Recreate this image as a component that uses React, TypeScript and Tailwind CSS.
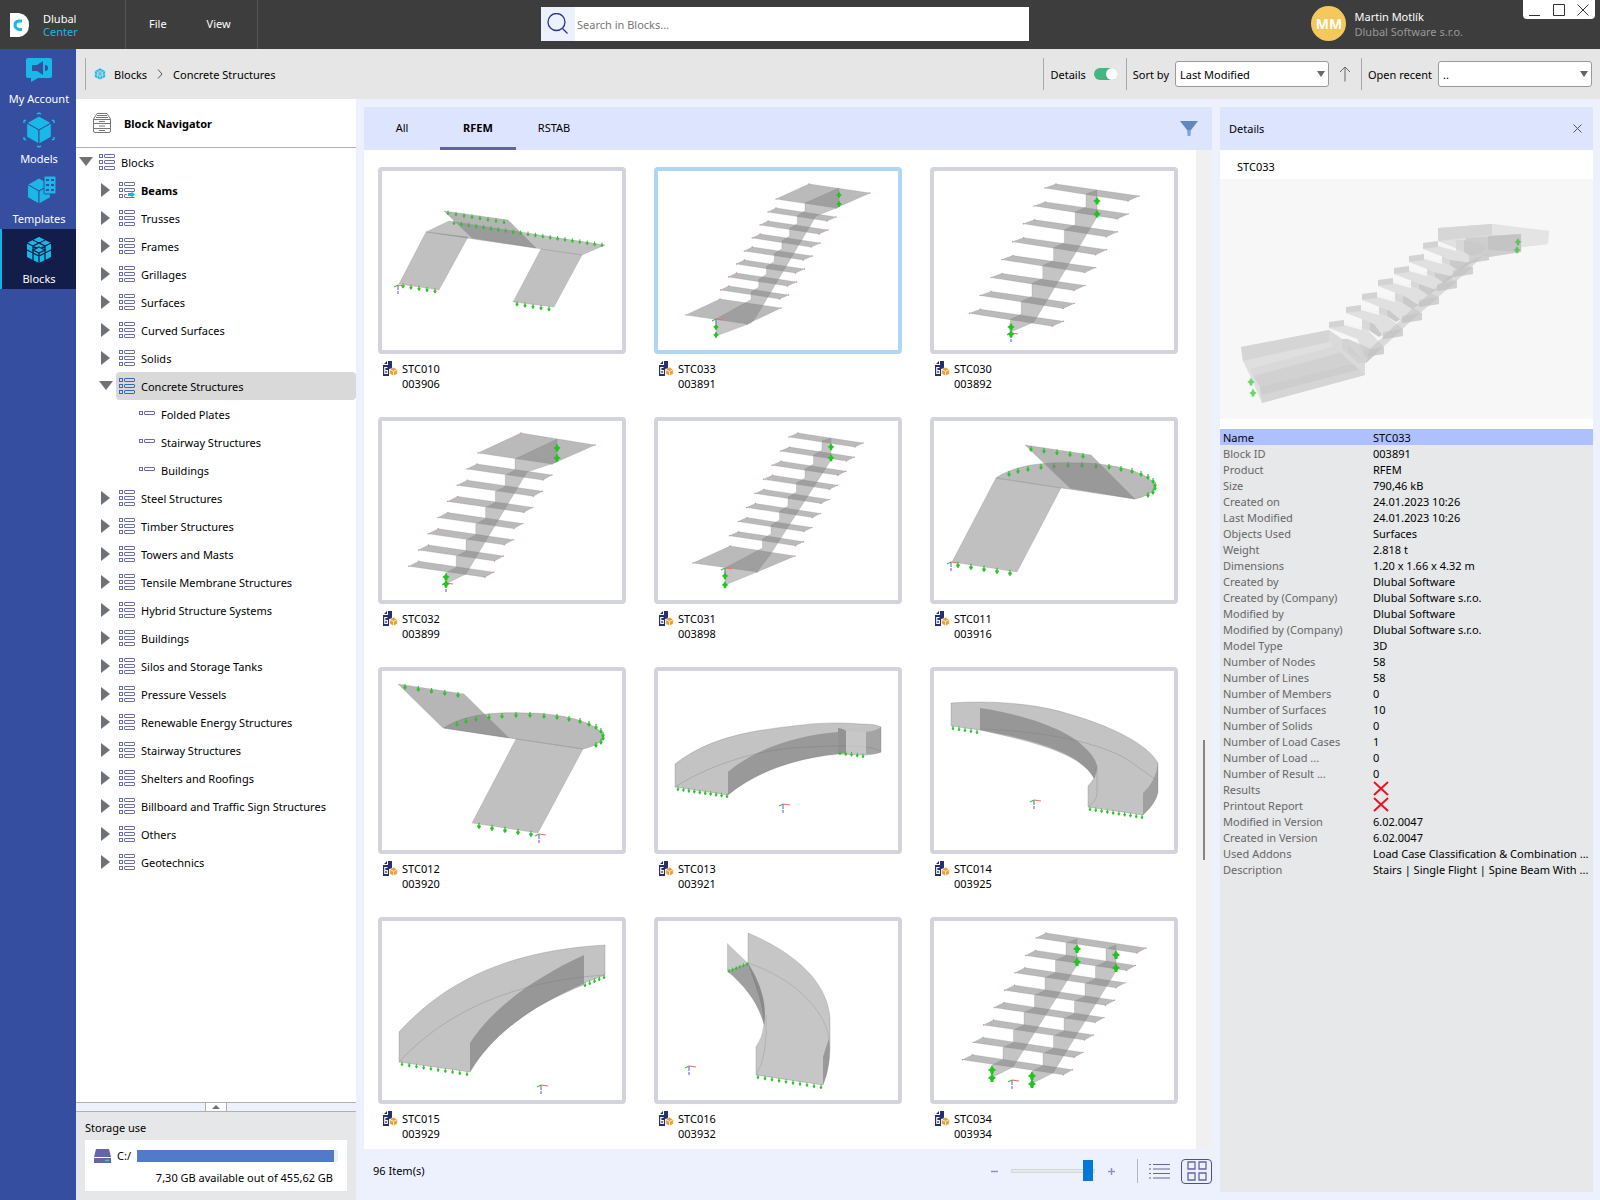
import React, { useState } from "react";

type Pt = [number, number];
const pts = (p: Pt[]) => p.map((q) => q.join(",")).join(" ");

/* ---------- 3D drawing primitives ---------- */

function Face({ p, o = 0.5 }: { p: Pt[]; o?: number }) {
  return <polygon points={pts(p)} fill="#828282" fillOpacity={o} stroke="#777" strokeOpacity={0.2} strokeWidth={1} />;
}

function Support({ x, y, s = 1 }: { x: number; y: number; s?: number }) {
  return (
    <path
      transform={`translate(${x} ${y}) scale(${s})`}
      d="M0 -5L1.700 -1.800L4.200 0L1.900 1.300L1.300 4H-1.300L-1.900 1.300L-4.200 0L-1.700 -1.800Z"
      fill="#1fc41f"
    />
  );
}

function Pin({ x, y, s = 1 }: { x: number; y: number; s?: number }) {
  return <path transform={`translate(${x} ${y}) scale(${s})`} d="M-0.600 -3H0.600V-1L1.900 0L0.600 2.600H-0.600L-1.900 0L-0.600 -1Z" fill="#2fc22f" />;
}

function Pins({ a, b, n, s = 1 }: { a: Pt; b: Pt; n: number; s?: number }) {
  return (
    <>
      {Array.from({ length: n }, (_, i) => (
        <Pin key={i} x={a[0] + ((b[0] - a[0]) * i) / (n - 1)} y={a[1] + ((b[1] - a[1]) * i) / (n - 1)} s={s} />
      ))}
    </>
  );
}

function Axis({ x, y }: { x: number; y: number }) {
  return (
    <g fill="none" strokeWidth={1.2}>
      <path d={`M${x} ${y}v9`} stroke="#7272e8" strokeDasharray="5 1" />
      <path d={`M${x} ${y}l7 1`} stroke="#ee6d6d" />
      <path d={`M${x} ${y}l-4 2`} stroke="#36c436" />
    </g>
  );
}

function Treads({ first, step, n }: { first: Pt[]; step: Pt; n: number }) {
  return (
    <>
      {Array.from({ length: n }, (_, k) => {
        const p = first.map(([x, y]): Pt => [x + step[0] * k, y + step[1] * k]);
        return (
          <g key={k}>
            <Face p={p} o={0.55} />
            {p.map(([x, y], i) => (
              <circle key={i} cx={x} cy={y} r={0.7} fill="#d98b8b" />
            ))}
          </g>
        );
      })}
    </>
  );
}

function Spine({ back, start, step, n, tail }: { back: Pt; start: Pt; step: Pt; n: number; tail: Pt[] }) {
  const p: Pt[] = [back];
  for (let k = 0; k < n; k++) {
    p.push([start[0] + step[0] * k, start[1] + step[1] * k]);
    p.push([start[0] + step[0] * k, start[1] + step[1] * (k + 1) - 5]);
  }
  return <Face p={[...p, ...tail]} o={0.47} />;
}

const arcPins: Pt[] = [
  [75, 53], [84, 50], [94, 48], [107, 46], [120, 45], [134, 44], [148, 44], [162, 45], [175, 46],
  [187, 48], [198, 50], [207, 53], [214, 56], [219, 60], [221, 64], [221, 67], [219, 71], [214, 74],
];

function RoundLanding() {
  return (
    <g>
      <path
        d="M62 57C84 42 118 41 142 42C178 42 208 50 218 60C225 67 220 73 201 78Z"
        fill="#828282"
        fillOpacity={0.55}
        stroke="#777"
        strokeOpacity={0.3}
      />
      {arcPins.map(([x, y]) => (
        <Pin key={`${x}-${y}`} x={x} y={y} />
      ))}
    </g>
  );
}

/* ---------- Thumbnails, each on a 240 x 179 canvas ---------- */

const drawings: Record<string, React.ReactNode> = {
  STC010: (
    <>
      <Face p={[[44, 61], [86, 66], [57, 119], [17, 113]]} />
      <Face p={[[159, 78], [200, 84], [172, 136], [131, 131]]} />
      <Face p={[[67, 50], [223, 74], [200, 84], [44, 61]]} />
      <Face p={[[62, 40], [126, 49], [154, 77], [90, 67]]} o={0.6} />
      <Pins a={[66, 42]} b={[122, 51]} n={8} s={0.8} />
      <Pins a={[72, 52]} b={[220, 74]} n={21} s={0.8} />
      <Pins a={[21, 115]} b={[53, 120]} n={5} s={0.9} />
      <Pins a={[135, 133]} b={[167, 138]} n={5} s={0.9} />
      <Axis x={16} y={114} />
    </>
  ),
  STC033: (
    <>
      <Treads first={[[151, 13], [212, 22], [178, 37], [118, 28]]} step={[0, 0]} n={1} />
      <Treads first={[[118, 37], [178, 46], [169, 50], [110, 41]]} step={[-7.9, 13]} n={7} />
      <Treads first={[[62, 128], [123, 137], [89, 153], [28, 144]]} step={[0, 0]} n={1} />
      <Spine back={[181, 17]} start={[147, 32]} step={[-7.7, 12.7]} n={8} tail={[[58, 148], [58, 165], [93, 152], [98, 146], [158, 45], [181, 36]]} />
      <Support x={181} y={24} s={0.7} />
      <Support x={181} y={33} s={0.7} />
      <Axis x={58} y={148} />
      <Support x={58} y={156} s={0.7} />
      <Support x={58} y={164} s={0.7} />
    </>
  ),
  STC030: (
    <>
      <Treads first={[[122, 13], [205, 25], [194, 30], [111, 17]]} step={[-10.8, 17.9]} n={8} />
      <Spine back={[163, 19]} start={[152, 23]} step={[-10.8, 17.9]} n={8} tail={[[100, 151], [163, 46]]} />
      <Support x={163} y={30} s={0.9} />
      <Support x={163} y={43} s={0.9} />
      <Axis x={77} y={162} />
      <Support x={77} y={156} s={0.9} />
      <Support x={77} y={163} s={0.9} />
    </>
  ),
  STC032: (
    <>
      <Treads first={[[139, 12], [213, 24], [170, 43], [96, 32]]} step={[0, 0]} n={1} />
      <Treads first={[[95, 43], [170, 54], [161, 59], [85, 48]]} step={[-9.7, 16.2]} n={7} />
      <Spine back={[175, 18]} start={[133, 38]} step={[-9.8, 16.2]} n={8} tail={[[84, 153], [145, 51], [175, 41]]} />
      <Support x={175} y={27} s={0.9} />
      <Support x={175} y={37} s={0.9} />
      <Axis x={64} y={162} />
      <Support x={64} y={156} s={0.9} />
      <Support x={64} y={163} s={0.9} />
    </>
  ),
  STC031: (
    <>
      <Treads first={[[140, 12], [205, 22], [197, 26], [131, 16]]} step={[-8.5, 14.1]} n={8} />
      <Treads first={[[72, 125], [137, 135], [99, 151], [35, 142]]} step={[0, 0]} n={1} />
      <Spine back={[173, 17]} start={[164, 20]} step={[-8.5, 14]} n={8} tail={[[67, 147], [67, 164], [99, 151], [112, 134], [173, 39]]} />
      <Support x={173} y={26} s={0.8} />
      <Support x={173} y={37} s={0.8} />
      <Axis x={67} y={147} />
      <Support x={67} y={155} s={0.8} />
      <Support x={67} y={164} s={0.8} />
    </>
  ),
  STC011: (
    <>
      <Face p={[[62, 57], [127, 67], [83, 151], [18, 141]]} />
      <RoundLanding />
      <Face p={[[91, 24], [157, 34], [201, 78], [136, 67]]} o={0.58} />
      <Pins a={[97, 28]} b={[149, 35]} n={5} />
      <Pins a={[24, 144]} b={[76, 152]} n={5} s={1.1} />
      <Axis x={17} y={141} />
    </>
  ),
  STC012: (
    <>
      <Face p={[[16, 13], [82, 23], [127, 67], [61, 57]]} o={0.58} />
      <RoundLanding />
      <Face p={[[134, 68], [201, 78], [156, 162], [90, 152]]} />
      <Pins a={[23, 16]} b={[76, 24]} n={5} />
      <Pins a={[97, 155]} b={[149, 163]} n={5} s={1.1} />
      <Axis x={157} y={163} />
    </>
  ),
  STC013: (
    <>
      <path
        d="M17 93C52 66 92 60 135 55Q169 50 203 53Q218 53 223 56V81Q219 83 208 84L180 83C148 86 104 96 70 124L17 116Z"
        fill="#828282"
        fillOpacity={0.48}
        stroke="#777"
        strokeOpacity={0.3}
      />
      <path d="M17 116C55 92 105 77 151 76Q185 74 207 76Q218 77 223 81" fill="none" stroke="#777" strokeOpacity={0.3} />
      <path d="M70 101C96 78 140 64 180 61V83C140 87 100 99 70 124Z" fill="#6b6b6b" fillOpacity={0.48} />
      <path d="M180 57Q186 58 188 60V82L180 83Z" fill="#6b6b6b" fillOpacity={0.55} />
      <path d="M188 60L208 61V83L188 82Z" fill="#c9c9c9" fillOpacity={0.7} />
      <path d="M208 61Q218 60 223 56V81Q219 83 208 83Z" fill="#6b6b6b" fillOpacity={0.35} />
      <Pins a={[20, 118]} b={[69, 125]} n={10} s={0.8} />
      <Pins a={[182, 82]} b={[205, 85]} n={5} s={0.8} />
      <Axis x={125} y={133} />
    </>
  ),
  STC014: (
    <>
      <path
        d="M17 32C58 29 104 33 135 43C180 56 214 74 224 92V121Q222 132 209 144L154 136V115Q163 106 162 98L160 107C148 86 116 74 46 59L17 55Z"
        fill="#828282"
        fillOpacity={0.48}
        stroke="#777"
        strokeOpacity={0.3}
      />
      <path d="M46 37C94 44 134 60 148 74Q164 88 163 98Q162 103 160 107C146 84 112 71 46 59Z" fill="#6b6b6b" fillOpacity={0.5} />
      <path d="M46 58C110 60 170 72 197 91Q218 106 222 109M163 94V124Q162 130 154 136" fill="none" stroke="#777" strokeOpacity={0.3} />
      <path d="M224 92V121Q222 132 209 144V122Q222 110 224 92Z" fill="#6b6b6b" fillOpacity={0.4} />
      <Pins a={[19, 57]} b={[43, 61]} n={5} s={0.8} />
      <Pins a={[156, 138]} b={[208, 146]} n={10} s={0.8} />
      <Axis x={100} y={129} />
    </>
  ),
  STC015: (
    <>
      <path
        d="M17 111C60 64 120 30 223 24V54L202 62C156 82 112 110 88 151L17 141Z"
        fill="#828282"
        fillOpacity={0.48}
        stroke="#777"
        strokeOpacity={0.3}
      />
      <path d="M17 141C62 92 130 60 223 54" fill="none" stroke="#777" strokeOpacity={0.3} />
      <path d="M88 122C110 88 150 58 202 34V64C156 82 112 110 88 151Z" fill="#6b6b6b" fillOpacity={0.5} />
      <Pins a={[20, 143]} b={[85, 153]} n={10} s={0.8} />
      <Pins a={[203, 64]} b={[222, 56]} n={5} s={0.8} />
      <Axis x={159} y={164} />
    </>
  ),
  STC016: (
    <>
      <path
        d="M90 12C142 34 170 64 172 98V126Q172 146 165 164L98 154V126Q105 116 106 104C106 84 98 66 90 42Z"
        fill="#828282"
        fillOpacity={0.46}
        stroke="#777"
        strokeOpacity={0.3}
      />
      <path d="M69 22L90 42L69 50Z" fill="#828282" fillOpacity={0.45} />
      <path d="M69 50L90 42C100 58 110 80 106 104C100 82 88 66 69 50Z" fill="#6b6b6b" fillOpacity={0.65} />
      <path d="M90 42C132 56 166 86 171 117M108 94Q110 136 98 154" fill="none" stroke="#777" strokeOpacity={0.25} />
      <path d="M171 117Q174 142 165 164V136Z" fill="#6b6b6b" fillOpacity={0.5} />
      <Pins a={[71, 50]} b={[89, 43]} n={6} s={0.7} />
      <Pins a={[100, 156]} b={[163, 166]} n={10} s={0.8} />
      <Axis x={31} y={145} />
    </>
  ),
  STC034: (
    <>
      <Treads first={[[112, 12], [212, 27], [203, 32], [102, 17]]} step={[-10.5, 17.4]} n={8} />
      <Spine back={[143, 18]} start={[132, 22]} step={[-10.5, 17.4]} n={8} tail={[[79, 146], [143, 44]]} />
      <Spine back={[182, 24]} start={[172, 28]} step={[-10.5, 17.4]} n={8} tail={[[119, 152], [182, 50]]} />
      <Support x={143} y={28} />
      <Support x={143} y={41} />
      <Support x={182} y={34} />
      <Support x={182} y={47} />
      <Axis x={78} y={159} />
      <Support x={58} y={149} />
      <Support x={58} y={157} />
      <Support x={98} y={155} />
      <Support x={98} y={163} />
    </>
  ),
};

function PreviewDrawing() {
  const steps: { l: Pt; r: Pt }[] = [
    { l: [109, 143], r: [164, 168] },
    { l: [126, 128], r: [183, 150] },
    { l: [142, 115], r: [202, 134] },
    { l: [158, 101], r: [219, 118] },
    { l: [174, 89], r: [237, 102] },
    { l: [189, 77], r: [253, 88] },
    { l: [203, 64], r: [269, 74] },
  ];
  return (
    <svg viewBox="0 0 373 240" className="block w-full bg-[#f7f7f7]" role="img" aria-label="STC033 preview">
      <polygon points="21,168 109,151 145,184 145,196 42,224 32,201 23,182" fill="#dfdfdf" />
      <polygon points="21,168 109,151 109,163 23,182" fill="#d5d5d5" />
      <polygon points="30,190 119,166 126,172 33,197" fill="#d9d9d9" />
      <polygon points="33,197 126,172 145,184 40,208" fill="#d1d1d1" />
      <polygon points="40,208 145,185 145,196 42,224" fill="#d5d5d5" />
      <polygon points="40,208 138,184 145,189 41,216" fill="#c9c9c9" fillOpacity={0.7} />
      <polygon points="218,49 272,45 329,52 328,65 302,68 301,73 269,78 240,71 218,62" fill="#e1e1e1" />
      <polygon points="218,49 272,45 272,56 218,62" fill="#d6d6d6" />
      <polygon points="272,45 329,52 328,65 302,68 302,56 272,56" fill="#e4e4e4" />
      <polygon points="109,151 122,160 145,184 145,196 109,163" fill="#dadada" />
      {steps.map(({ l: [x, y], r }) => (
        <g key={x}>
          <polygon
            points={pts([[x, y + 6], [x + 15, y + 3], [x + 36, y + 5], r, [r[0], r[1] + 7], [r[0] - 18, r[1] + 10], [x + 28, y + 17]])}
            fill="#e0e0e0"
          />
          <polygon points={pts([[x + 41, y - 3], [x + 60, y + 1], [x + 64, y + 6], [x + 50, y + 15], [x + 41, y + 9]])} fill="#cacaca" />
          <polygon points={pts([[x + 33, y - 3], [x + 41, y - 3], [x + 41, y + 9], [x + 33, y + 6]])} fill="#d8d8d8" />
          <polygon points={pts([[x, y], [x + 15, y - 2], [x + 15, y + 4], [x, y + 6]])} fill="#d3d3d3" />
          <polygon points={pts([[x + 15, y], [x + 33, y + 5], [x + 33, y + 8], [x + 15, y + 3]])} fill="#f5f5f5" />
          <polygon points={pts([[r[0] - 20, r[1] + 3], r, [r[0], r[1] + 7], [r[0] - 20, r[1] + 10]])} fill="#d0d0d0" />
        </g>
      ))}
      <polygon points="246,59 272,57 301,55 301,73 269,78 246,72" fill="#c9c9c9" fillOpacity={0.8} />
      <polygon points="268,57 301,55 301,73 268,71" fill="#c1c1c1" fillOpacity={0.7} />
      <polygon points="122,160 128,160 128,172 146,184 138,184 122,170" fill="#d3d3d3" />
      <polygon points="128,160 158,173 146,184 128,172" fill="#cacaca" fillOpacity={0.8} />
      <polygon points="262,77 246,84 220,105 190,132 150,170 146,184 190,143 223,114 250,90" fill="#bebebe" fillOpacity={0.5} />
      <g opacity={0.65}>
        <Support x={298} y={63} s={0.8} />
        <Support x={297} y={71} s={0.8} />
        <Support x={31} y={203} s={0.9} />
        <Support x={33} y={214} s={0.9} />
      </g>
    </svg>
  );
}

/* ---------- Icons ---------- */

function Cube({ x, y, r, fill = "#19b8e6", line }: { x: number; y: number; r: number; fill?: string; line: string }) {
  const w = r * 0.88;
  const h = r / 2;
  return (
    <g transform={`translate(${x} ${y})`} fill={fill} stroke={line} strokeWidth={r > 6 ? 1 : 0.6} strokeLinejoin="round">
      <path d={`M0 ${-r}L${w} ${-h}L0 0L${-w} ${-h}Z`} />
      <path d={`M${-w} ${-h}L0 0V${r}L${-w} ${h}Z`} />
      <path d={`M${w} ${-h}L0 0V${r}L${w} ${h}Z`} />
    </g>
  );
}

function AccountIcon() {
  return (
    <svg width="36" height="36" viewBox="0 0 36 36">
      <path d="M7 6h22a2 2 0 0 1 2 2v16a2 2 0 0 1-2 2H17l-7 4v-4H7a2 2 0 0 1-2-2V8a2 2 0 0 1 2-2Z" fill="#19b8e6" />
      <path d="M11 13h5l6-4v14l-6-4h-5ZM24 13q3 0 3 3t-3 3Z" fill="#354e9f" />
    </svg>
  );
}

function ModelsIcon() {
  return (
    <svg width="36" height="36" viewBox="0 0 36 36">
      <Cube x={18} y={18} r={14} line="#354e9f" />
      <g fill="none" stroke="#19b8e6" strokeWidth="1.5">
        <path d="M16 2l2-1 2 1M16 34l2 1 2-1M3 11V9l2-1M33 11V9l-2-1M3 25v2l2 1M33 25v2l-2 1" />
      </g>
    </svg>
  );
}

function TemplatesIcon() {
  return (
    <svg width="36" height="36" viewBox="0 0 36 36">
      <Cube x={18} y={19} r={13} line="#354e9f" />
      <rect x="23" y="4" width="12" height="18" rx="1" fill="#19b8e6" stroke="#354e9f" />
      <path d="M25 8h3M30 8h3M25 13h3M30 13h3M25 18h3M30 18h3" stroke="#354e9f" strokeWidth="2" />
    </svg>
  );
}

function BlocksIcon({ size, line }: { size: number; line: string }) {
  return (
    <svg width={size} height={size} viewBox="-14 -14 28 28">
      <path d="M0 -13L12 -7V7L0 13L-12 7V-7Z" fill="#19b8e6" />
      <g stroke={line} strokeWidth="1.3" fill="none">
        <path d="M-12 -7L0 -1L12 -7M0 -1V13M-6 -10L6 -4V10M6 -10L-6 -4V10M-12 0L-6 3L0 6L6 3L12 0" />
      </g>
      <path d="M0 -3L6 0L0 3L-6 0Z" fill="#19b8e6" stroke={line} strokeWidth="1.3" />
      <path d="M0 -13L5 -10L0 -8L-5 -10Z" fill="#19b8e6" />
    </svg>
  );
}

function GroupIcon({ active, marked }: { active?: boolean; marked?: boolean }) {
  return (
    <svg width="16" height="16" viewBox="0 0 16 16" className="shrink-0">
      <g fill="none" stroke={active ? "#3f66b4" : "#6a6bae"}>
        {[0.5, 6.5, 12.5].map((y) => (
          <g key={y}>
            <rect x="0.5" y={y} width="3" height="3" />
            <rect x="5.5" y={y} width="10" height="3" rx="0.5" />
          </g>
        ))}
      </g>
      {marked && <path d="M8 10H16V15H8Z" fill="#fff" />}
      {marked && <path d="M9 11h3.500V9.500L16 12.500L12.500 15.500V14H9Z" fill="#12b4e4" />}
    </svg>
  );
}

function LeafIcon() {
  return (
    <svg width="16" height="16" viewBox="0 0 16 16" className="shrink-0" fill="none" stroke="#6a6bae">
      <rect x="0.5" y="5.5" width="3" height="3" />
      <rect x="5.5" y="5.5" width="10" height="3" rx="0.5" />
    </svg>
  );
}

function Triangle({ open }: { open?: boolean }) {
  return (
    <svg width="14" height="14" viewBox="0 0 14 14" className="shrink-0" fill="#6f7177">
      <path d={open ? "M0 2H14L7 11Z" : "M2 0L11 7L2 14Z"} />
    </svg>
  );
}

function FileIcon() {
  return (
    <svg width="15" height="15" viewBox="0 0 15 15" className="shrink-0">
      <path d="M5 0H9V8H5ZM4 0V3H1Z" fill="#27306f" />
      <path d="M0 4H6V15H0Z" fill="#27306f" />
      <path d="M4.500 6.500H1.800V12.500H4.300V9.500H1.800" fill="none" stroke="#fff" strokeWidth="1.200" />
      <Cube x={10.5} y={10.6} r={4.4} fill="#e8a02f" line="#fff" />
    </svg>
  );
}

function CrossIcon() {
  return (
    <svg width="16" height="16" viewBox="0 0 16 16" className="block" stroke="#ee1122" strokeWidth="2" role="img" aria-label="No">
      <path d="M1 1L15 14M15 1L1 14" />
    </svg>
  );
}

/* ---------- Data ---------- */

type Node = { label: string; level: 0 | 1 | 2; open?: boolean; bold?: boolean };
const tree: Node[] = [
  { label: "Blocks", level: 0, open: true },
  { label: "Beams", level: 1, bold: true },
  { label: "Trusses", level: 1 },
  { label: "Frames", level: 1 },
  { label: "Grillages", level: 1 },
  { label: "Surfaces", level: 1 },
  { label: "Curved Surfaces", level: 1 },
  { label: "Solids", level: 1 },
  { label: "Concrete Structures", level: 1, open: true },
  { label: "Folded Plates", level: 2 },
  { label: "Stairway Structures", level: 2 },
  { label: "Buildings", level: 2 },
  { label: "Steel Structures", level: 1 },
  { label: "Timber Structures", level: 1 },
  { label: "Towers and Masts", level: 1 },
  { label: "Tensile Membrane Structures", level: 1 },
  { label: "Hybrid Structure Systems", level: 1 },
  { label: "Buildings", level: 1 },
  { label: "Silos and Storage Tanks", level: 1 },
  { label: "Pressure Vessels", level: 1 },
  { label: "Renewable Energy Structures", level: 1 },
  { label: "Stairway Structures", level: 1 },
  { label: "Shelters and Roofings", level: 1 },
  { label: "Billboard and Traffic Sign Structures", level: 1 },
  { label: "Others", level: 1 },
  { label: "Geotechnics", level: 1 },
];

const blocks: [string, string][] = [
  ["STC010", "003906"], ["STC033", "003891"], ["STC030", "003892"],
  ["STC032", "003899"], ["STC031", "003898"], ["STC011", "003916"],
  ["STC012", "003920"], ["STC013", "003921"], ["STC014", "003925"],
  ["STC015", "003929"], ["STC016", "003932"], ["STC034", "003934"],
];

const details: [string, string | null][] = [
  ["Name", "STC033"],
  ["Block ID", "003891"],
  ["Product", "RFEM"],
  ["Size", "790,46 kB"],
  ["Created on", "24.01.2023 10:26"],
  ["Last Modified", "24.01.2023 10:26"],
  ["Objects Used", "Surfaces"],
  ["Weight", "2.818 t"],
  ["Dimensions", "1.20 x 1.66 x 4.32 m"],
  ["Created by", "Dlubal Software"],
  ["Created by (Company)", "Dlubal Software s.r.o."],
  ["Modified by", "Dlubal Software"],
  ["Modified by (Company)", "Dlubal Software s.r.o."],
  ["Model Type", "3D"],
  ["Number of Nodes", "58"],
  ["Number of Lines", "58"],
  ["Number of Members", "0"],
  ["Number of Surfaces", "10"],
  ["Number of Solids", "0"],
  ["Number of Load Cases", "1"],
  ["Number of Load ...", "0"],
  ["Number of Result ...", "0"],
  ["Results", null],
  ["Printout Report", null],
  ["Modified in Version", "6.02.0047"],
  ["Created in Version", "6.02.0047"],
  ["Used Addons", "Load Case Classification & Combination ..."],
  ["Description", "Stairs | Single Flight | Spine Beam With ..."],
];

/* ---------- Page parts ---------- */

function Header() {
  return (
    <header className="flex h-[49px] shrink-0 bg-[#3d3d3d] text-white">
      <div className="flex w-[126px] items-center gap-[13px] border-r border-[#555] pl-[10px]">
        <svg width="20" height="24" viewBox="0 0 20 24">
          <path d="M0 0H9Q19 2 19 12T9 24H0Z" fill="#fff" />
          <path d="M12 8H9Q5 8.500 5 12T9 16.500H12" fill="none" stroke="#19b8e6" strokeWidth="3" />
        </svg>
        <div className="leading-[13px]">
          <div>Dlubal</div>
          <div className="text-[#19b8e6]">Center</div>
        </div>
      </div>
      <nav className="flex w-[132px] items-center gap-[40px] border-r border-[#555] pb-px pl-[23px]">
        <button type="button">File</button>
        <button type="button">View</button>
      </nav>
      <label className="mt-[7px] ml-[283px] flex h-[34px] max-w-[488px] flex-1 bg-white">
        <span className="flex w-[34px] items-center justify-center bg-[#edf1fe]">
          <svg width="22" height="22" viewBox="0 0 22 22" fill="none" stroke="#27388a" strokeWidth="1.300">
            <circle cx="9.500" cy="9" r="8.500" />
            <path d="M15.500 15.500L20.500 20.500" />
          </svg>
        </span>
        <input
          type="text"
          aria-label="Search in Blocks"
          placeholder="Search in Blocks..."
          className="min-w-0 flex-1 px-[2px] pt-[2px] text-black outline-none placeholder:text-[#777]"
        />
      </label>
      <div className="ml-auto flex items-start gap-2 pt-[6px]">
        <div className="flex size-[35px] items-center justify-center rounded-full bg-[#f4c85c] text-[14px] font-bold">MM</div>
        <div className="pt-[3px] leading-[15px]">
          <div>Martin Motlík</div>
          <div className="text-[#999]">Dlubal Software s.r.o.</div>
        </div>
      </div>
      <div className="mr-[5px] ml-[60px] flex h-[19px] w-[72px] items-center justify-between rounded-b bg-white px-[6px]">
        <button type="button" aria-label="Minimize">
          <svg width="12" height="12" stroke="#333"><path d="M0 11.500H11" /></svg>
        </button>
        <button type="button" aria-label="Maximize">
          <svg width="12" height="12" fill="none" stroke="#333"><path d="M0.500 0.500H11.500V11.500H0.500Z" /></svg>
        </button>
        <button type="button" aria-label="Close">
          <svg width="12" height="12" stroke="#333"><path d="M0.500 0.500L11.500 11.500M11.500 0.500L0.500 11.500" /></svg>
        </button>
      </div>
    </header>
  );
}

function Rail() {
  const item = "flex h-[60px] flex-col items-center justify-between border-l-2 pt-[3px] pb-[2px] text-white";
  return (
    <nav className="w-[76px] shrink-0 bg-[#354e9f]">
      <a href="#account" className={`${item} border-transparent`}><AccountIcon />My Account</a>
      <a href="#models" className={`${item} border-transparent`}><ModelsIcon />Models</a>
      <a href="#templates" className={`${item} border-transparent`}><TemplatesIcon />Templates</a>
      <a href="#blocks" className={`${item} border-[#12b4e4] bg-[#121e49]`}>
        <span className="flex h-9 items-center"><BlocksIcon size={28} line="#121e49" /></span>
        Blocks
      </a>
    </nav>
  );
}

function Picker({ id, label, value }: { id: string; label: string; value: string }) {
  return (
    <span className="flex items-center gap-[6px]">
      <label htmlFor={id} className="pt-[2px]">{label}</label>
      <span className="relative">
        <select id={id} className="block h-[26px] w-[154px] appearance-none rounded-[3px] border border-[#9a9a9a] bg-white px-1 pt-[2px]">
          <option>{value}</option>
        </select>
        <svg width="8" height="6" className="pointer-events-none absolute top-[10px] right-[4px]" fill="#666">
          <path d="M0 0H8L4 6Z" />
        </svg>
      </span>
    </span>
  );
}

function Toolbar() {
  const bar = <span className="h-8 w-px bg-[#a8a8a8]" />;
  return (
    <div className="flex h-[50px] shrink-0 items-center bg-[#e6e6e6] pr-2 pl-[9px]">
      {bar}
      <nav className="flex items-center gap-2 pl-2">
        <BlocksIcon size={12} line="#e6e6e6" />
        <a href="#blocks" className="pt-[2px]">Blocks</a>
        <svg width="10" height="10" viewBox="0 0 10 10" fill="none" stroke="#555">
          <path d="M3 0.500L7 5L3 9.500" />
        </svg>
        <a href="#concrete" className="pt-[2px]">Concrete Structures</a>
      </nav>
      <div className="ml-auto flex items-center gap-[6px]">
        {bar}
        <label htmlFor="details-toggle" className="pt-[2px]">Details</label>
        <input
          id="details-toggle"
          type="checkbox"
          defaultChecked
          className="mx-[2px] flex h-3 w-6 appearance-none justify-end rounded-full bg-[#41b883] before:size-3 before:rounded-full before:bg-white"
        />
        {bar}
        <Picker id="sort" label="Sort by" value="Last Modified" />
        <button type="button" aria-label="Ascending" className="mx-[4px]">
          <svg width="12" height="16" viewBox="0 0 12 16" fill="none" stroke="#666"><path d="M6 15.500V1M1 6L6 1L11 6" /></svg>
        </button>
        {bar}
        <Picker id="recent" label="Open recent" value=".." />
      </div>
    </div>
  );
}

function TreeRow({ node }: { node: Node }) {
  const active = node.label === "Concrete Structures";
  return (
    <li role="treeitem" aria-expanded={node.open} aria-selected={active} className="flex h-7 items-center">
      {node.level === 0 && <span className="w-[3px]" />}
      {node.level === 1 && <span className="w-[23px]" />}
      {node.level === 2 && <span className="w-[60px]" />}
      {node.level < 2 && <Triangle open={node.open} />}
      <button
        type="button"
        className={`flex h-7 flex-1 items-center gap-[6px] rounded-sm text-left ${node.level === 2 ? "pl-[3px]" : "ml-[3px] pl-[3px]"} ${active ? "bg-[#d9d9d9]" : ""} ${node.bold ? "font-bold" : ""}`}
      >
        {node.level === 2 ? <LeafIcon /> : <GroupIcon active={active} marked={node.bold} />}
        <span className="pt-[2px]">{node.label}</span>
      </button>
    </li>
  );
}

function Navigator() {
  return (
    <aside className="flex w-[280px] shrink-0 flex-col bg-white">
      <h2 className="flex h-[49px] items-center gap-[13px] border-b border-[#b0b0b0] pl-[17px] font-bold">
        <svg width="18" height="20" viewBox="0 0 18 20" fill="none" stroke="#777">
          <path d="M0.500 6L4 0.500H14L17.500 6V18Q17.500 19.500 16 19.500H2Q0.500 19.500 0.500 18ZM0.500 6.500H17.500M0.500 10.500H17.500M0.500 15.500H17.500M4 2.500H14M3 4.500H15M6 8.500H12M6 13H12M6 17.500H12" />
        </svg>
        <span className="pt-[2px]">Block Navigator</span>
      </h2>
      <ul role="tree" className="min-h-0 flex-1 overflow-hidden">
        {tree.map((n, i) => (
          <TreeRow key={i} node={n} />
        ))}
      </ul>
      <div className="flex h-[10px] justify-center border-y border-[#b0b0b0] bg-[#edf1fe]">
        <button type="button" aria-label="Collapse storage" className="flex w-[22px] items-center justify-center border-x border-[#b0b0b0] bg-white">
          <svg width="8" height="4" fill="#6f7177"><path d="M0 4L4 0L8 4Z" /></svg>
        </button>
      </div>
      <section className="bg-[#e6e7e8] px-[9px] pt-2 pb-[9px]">
        <h3 className="leading-4">Storage use</h3>
        <div className="mt-1 bg-white px-[9px] pt-2 pb-[5px]">
          <div className="flex items-center">
            <svg width="17" height="14" viewBox="0 0 17 14">
              <path d="M2 0H15L17 8H0Z" fill="#6465a8" />
              <path d="M0 9H17V14H0Z" fill="#6465a8" />
              <path d="M11 11.500H15" stroke="#35d39a" strokeWidth="1.500" />
            </svg>
            <span className="w-[26px] pl-[6px]">C:/</span>
            <div role="progressbar" aria-valuenow={98} className="h-3 flex-1 bg-[#edf0f5]">
              <div className="h-3 w-[98%] bg-[#507bcb]" />
            </div>
          </div>
          <p className="pt-[6px] pr-[5px] text-right leading-4">7,30 GB available out of 455,62 GB</p>
        </div>
      </section>
    </aside>
  );
}

function Card({ name, id, selected, onSelect }: { name: string; id: string; selected: boolean; onSelect: () => void }) {
  return (
    <button type="button" onClick={onSelect} className="block w-[248px] pb-[14px] text-left">
      <span className={`block rounded-[4px] border-4 ${selected ? "border-[#b0d6f4]" : "border-[#d3d3de]"}`}>
        <svg viewBox="0 0 240 179" className="block w-full">{drawings[name]}</svg>
      </span>
      <span className="mt-[7px] mb-3 flex gap-1 pl-[5px]">
        <FileIcon />
        <span className="leading-[15px]">
          {name}
          <br />
          {id}
        </span>
      </span>
    </button>
  );
}

function Gallery() {
  const [selected, setSelected] = useState("STC033");
  return (
    <main className="flex min-w-0 flex-1 flex-col">
      <div role="tablist" className="flex h-[43px] shrink-0 items-center bg-[#dde4fe]">
        <button role="tab" type="button" className="h-full w-[76px] pb-[2px]">All</button>
        <button role="tab" type="button" aria-selected className="h-full w-[76px] border-b-[3px] border-[#6064a6] pt-px font-bold">RFEM</button>
        <button role="tab" type="button" className="h-full w-[76px] pb-[2px]">RSTAB</button>
        <button type="button" aria-label="Filter" className="mr-[14px] ml-auto">
          <svg width="18" height="16" viewBox="0 0 18 16">
            <path d="M0 0H18L11 9H7Z" fill="#6386bf" />
            <path d="M7 9H11L10.500 15H7.500Z" fill="#7ba6ea" />
          </svg>
        </button>
      </div>
      <div className="flex min-h-0 flex-1 bg-white">
        <div className="grid flex-1 grid-cols-[repeat(auto-fill,248px)] content-start gap-x-7 overflow-hidden pt-[17px] pl-[14px]">
          {blocks.map(([name, id]) => (
            <Card key={name} name={name} id={id} selected={selected === name} onSelect={() => setSelected(name)} />
          ))}
        </div>
        <div className="flex w-4 flex-col items-center bg-[#f0f0f0]">
          <span className="grow-[590]" />
          <span className="w-[2px] grow-[120] bg-[#858585]" />
          <span className="grow-[289]" />
        </div>
      </div>
      <footer className="flex h-[51px] shrink-0 items-center pb-[7px] pl-[9px]">
        <span>96 Item(s)</span>
        <div className="ml-auto flex items-center">
          <button type="button" aria-label="Smaller" className="text-[#8f92c6]">
            <svg width="7" height="7" stroke="currentColor" strokeWidth="1.500"><path d="M0 3.500H7" /></svg>
          </button>
          <input
            type="range"
            aria-label="Thumbnail size"
            defaultValue={99}
            className="mx-[13px] h-[21px] w-[84px] appearance-none bg-transparent [&::-webkit-slider-runnable-track]:h-1 [&::-webkit-slider-runnable-track]:border [&::-webkit-slider-runnable-track]:border-[#d6d6d6] [&::-webkit-slider-runnable-track]:bg-[#e7eaea] [&::-webkit-slider-thumb]:-mt-[10px] [&::-webkit-slider-thumb]:h-[21px] [&::-webkit-slider-thumb]:w-[10px] [&::-webkit-slider-thumb]:appearance-none [&::-webkit-slider-thumb]:bg-[#0078d7]"
          />
          <button type="button" aria-label="Larger" className="text-[#8f92c6]">
            <svg width="7" height="7" stroke="currentColor" strokeWidth="1.500"><path d="M0 3.500H7M3.500 0V7" /></svg>
          </button>
          <span className="mr-[11px] ml-[22px] h-6 w-px bg-[#b0b4c4]" />
          <button type="button" aria-label="List view">
            <svg width="21" height="17" viewBox="0 0 21 17" stroke="#6465a8">
              <path d="M0 1.500H2M4 1.500H21M0 6H2M4 6H21M0 10.500H2M4 10.500H21M0 15H2M4 15H21" />
            </svg>
          </button>
          <button type="button" aria-label="Grid view" className="ml-[11px] flex h-[25px] w-[31px] items-center justify-center rounded-[4px] border border-[#4c4f96]">
            <svg width="20" height="20" viewBox="0 0 20 20" fill="none" stroke="#6465a8" strokeWidth="1.300">
              <path d="M1 1H8V8H1ZM12 1H19V8H12ZM1 12H8V19H1ZM12 12H19V19H12Z" />
            </svg>
          </button>
        </div>
      </footer>
    </main>
  );
}

function DetailsPanel() {
  return (
    <aside className="mb-2 flex w-[373px] shrink-0 flex-col bg-[#e6e8ea]">
      <h2 className="flex h-[43px] shrink-0 items-center justify-between bg-[#dde4fe] pr-[11px] pl-[9px]">
        Details
        <button type="button" aria-label="Close details">
          <svg width="9" height="9" stroke="#555"><path d="M0.500 0.500L8.500 8.500M8.500 0.500L0.500 8.500" /></svg>
        </button>
      </h2>
      <div className="bg-white pb-[10px]">
        <p className="flex h-[29px] items-center pt-[5px] pl-[17px]">STC033</p>
        <PreviewDrawing />
      </div>
      <table className="w-full table-fixed border-collapse">
        <tbody>
          {details.map(([label, value], i) => (
            <tr key={label} className={i === 0 ? "h-4 bg-[#adc0ff]" : "h-4"}>
              <th scope="row" className={`w-[150px] p-0 pt-px pl-[3px] text-left leading-[15px] font-normal ${i === 0 ? "text-black" : "text-[#666]"}`}>
                {label}
              </th>
              <td className={`p-0 pl-[3px] leading-[15px] whitespace-nowrap ${value ? "pt-px" : ""}`}>{value ?? <CrossIcon />}</td>
            </tr>
          ))}
        </tbody>
      </table>
    </aside>
  );
}

export default function App() {
  return (
    <div className="flex h-screen min-h-[900px] flex-col overflow-hidden bg-[#edf1fe] font-['Noto_Sans',sans-serif] text-[11px] leading-4 text-black">
      <Header />
      <div className="flex min-h-0 flex-1">
        <Rail />
        <div className="flex min-w-0 flex-1 flex-col">
          <Toolbar />
          <div className="flex min-h-0 flex-1">
            <Navigator />
            <div className="flex min-w-0 flex-1 gap-2 pt-2 pr-[7px] pl-2">
              <Gallery />
              <DetailsPanel />
            </div>
          </div>
        </div>
      </div>
    </div>
  );
}
